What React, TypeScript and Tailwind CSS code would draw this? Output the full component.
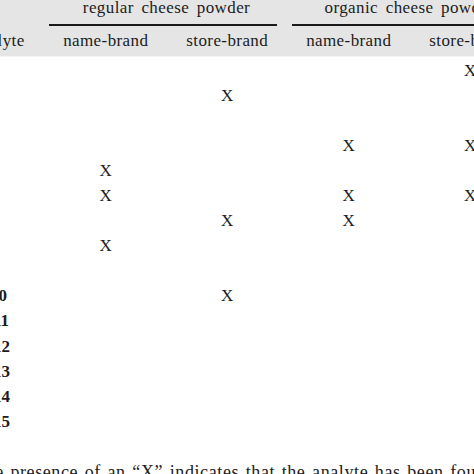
import React from "react";

const rows: { label: string; labelCls: string; x: boolean[] }[] = [
  { label: "", labelCls: "", x: [false, false, false, true] },
  { label: "", labelCls: "", x: [false, true, false, false] },
  { label: "", labelCls: "", x: [false, false, false, false] },
  { label: "", labelCls: "", x: [false, false, true, true] },
  { label: "", labelCls: "", x: [true, false, false, false] },
  { label: "", labelCls: "", x: [true, false, true, true] },
  { label: "", labelCls: "", x: [false, true, true, false] },
  { label: "", labelCls: "", x: [true, false, false, false] },
  { label: "", labelCls: "", x: [false, false, false, false] },
  { label: "10", labelCls: "-ml-[10px]", x: [false, true, false, false] },
  { label: "11", labelCls: "-ml-[7px]", x: [false, false, false, false] },
  { label: "12", labelCls: "-ml-[7px]", x: [false, false, false, false] },
  { label: "13", labelCls: "-ml-[7px]", x: [false, false, false, false] },
  { label: "14", labelCls: "-ml-[7px]", x: [false, false, false, false] },
  { label: "15", labelCls: "-ml-[7px]", x: [false, false, false, false] },
];

export default function App() {
  return (
    <div className="w-[474px] h-[474px] overflow-hidden bg-white text-[#1c1c1c] font-['Liberation_Serif',serif] text-[17px] tracking-[0.4px]">
      <div className="w-[531px]">
        {/* header */}
        <div className="bg-[#e5e5e5] h-[56px] flex flex-col">
          <div className="flex">
            <div className="w-[45px] shrink-0" />
            <div className="w-[243px] shrink-0 flex flex-col">
              <div className="h-[16px] leading-[16px] text-center whitespace-nowrap [word-spacing:3px]">
                regular cheese powder
              </div>
              <div className="mt-[8px] h-[2px] bg-[#1a1a1a] ml-[4px] mr-[11px]" />
            </div>
            <div className="w-[243px] shrink-0 flex flex-col">
              <div className="h-[16px] leading-[16px] text-center whitespace-nowrap [word-spacing:3px]">
                organic cheese powder
              </div>
              <div className="mt-[8px] h-[2px] bg-[#1a1a1a] ml-[4px] mr-[11px]" />
            </div>
          </div>
          <div className="mt-[6px] h-[17px] leading-[17px] grid grid-cols-[45px_121.5px_121.5px_121.5px_121.5px] whitespace-nowrap">
            <div className="-ml-[32px]">Analyte</div>
            <div className="text-center">name-brand</div>
            <div className="text-center">store-brand</div>
            <div className="text-center">name-brand</div>
            <div className="text-center">store-brand</div>
          </div>
        </div>
        <div className="h-[1px] bg-[#f4f4f4]" />
        {/* body */}
        <div className="mt-[0.5px] flex flex-col">
          {rows.map((r, i) => (
            <div
              key={i}
              className="h-[25.1px] leading-[25.1px] grid grid-cols-[45px_121.5px_121.5px_121.5px_121.5px]"
            >
              <div className={"font-bold whitespace-nowrap tracking-normal " + r.labelCls}>{r.label}</div>
              {r.x.map((v, j) => (
                <div key={j} className="text-center">
                  {v ? "X" : ""}
                </div>
              ))}
            </div>
          ))}
        </div>
        {/* footnote */}
        <div className="mt-[28.5px] -ml-[26px] text-[18px] leading-[20px] tracking-[0.6px] [word-spacing:1.5px] whitespace-nowrap">
          The presence of an “X” indicates that the analyte has been found in the sample.
        </div>
      </div>
    </div>
  );
}
